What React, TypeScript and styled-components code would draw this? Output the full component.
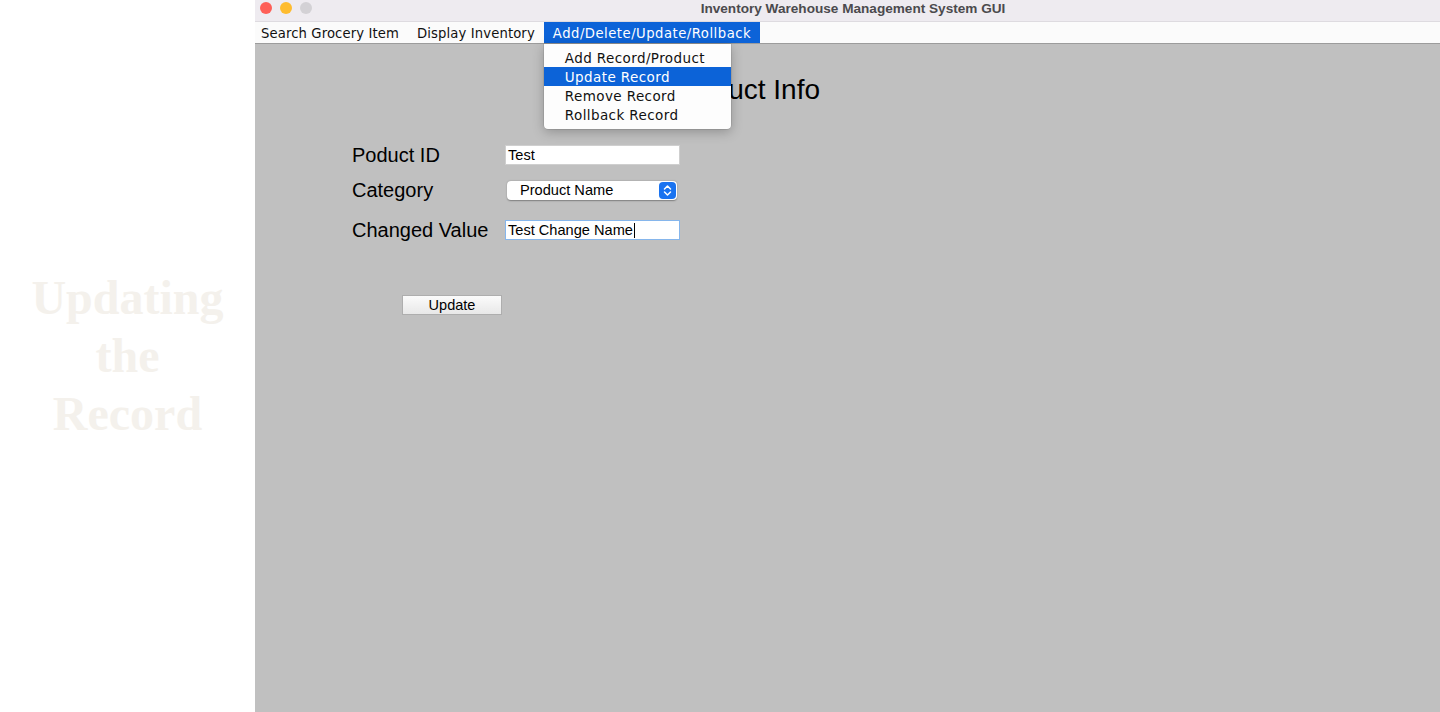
import styled, { createGlobalStyle } from "styled-components";

const GlobalStyle = createGlobalStyle`
  html, body {
    margin: 0;
    padding: 0;
    background: #ffffff;
  }
  * {
    box-sizing: border-box;
  }
`;

const Page = styled.div`
  display: flex;
  height: 100vh;
  min-height: 712px;
`;

const SidePanel = styled.aside`
  width: 255px;
  flex-shrink: 0;
  display: flex;
  align-items: center;
  justify-content: center;
  background: #ffffff;
`;

const SideHeading = styled.h1`
  margin: 0;
  font-family: "Liberation Serif", "DejaVu Serif", serif;
  font-weight: 700;
  font-size: 48px;
  line-height: 58px;
  color: #f4f1ec;
  text-align: center;
`;

const Window = styled.div`
  flex: 1;
  display: flex;
  flex-direction: column;
`;

const TitleBar = styled.div`
  height: 22px;
  display: grid;
  grid-template-columns: 1fr auto 1fr;
  align-items: start;
  padding-top: 2px;
  background: #eeebf0;
  border-bottom: 1px solid #dedbe0;
`;

const Lights = styled.div`
  display: flex;
  gap: 8px;
  padding-left: 5px;
`;

const Light = styled.span<{ $color: string }>`
  width: 12px;
  height: 12px;
  border-radius: 50%;
  background: ${(p) => p.$color};
`;

const WindowTitle = styled.div`
  margin-left: 11px;
  font-family: "Liberation Sans", Arial, sans-serif;
  font-weight: 700;
  font-size: 13.6px;
  line-height: 13px;
  color: #4b4a4d;
`;

const MenuBar = styled.nav`
  height: 22px;
  display: flex;
  align-items: stretch;
  background: #fbfbfb;
  border-bottom: 1px solid #9c9c9c;
`;

const MenuItem = styled.div<{ $active?: boolean }>`
  position: relative;
  display: flex;
  align-items: center;
  padding: 2px 9px 0;
  font-family: "DejaVu Sans", "Liberation Sans", sans-serif;
  font-size: 13.2px;
  letter-spacing: ${(p) => (p.$active ? "0.5px" : "0.12px")};
  color: ${(p) => (p.$active ? "#ffffff" : "#111111")};
  background: ${(p) => (p.$active ? "#0c63d8" : "transparent")};
  white-space: nowrap;

  &:first-child {
    padding-left: 6px;
  }
`;

const Dropdown = styled.ul`
  position: absolute;
  top: calc(100% + 1px);
  left: 0;
  width: 187px;
  margin: 0;
  padding: 4px 0 5px;
  list-style: none;
  background: #fdfdfd;
  border-radius: 0 0 4px 4px;
  box-shadow: 0 3px 12px rgba(0, 0, 0, 0.25), 0 0 0 0.5px rgba(0, 0, 0, 0.15);
  z-index: 10;
`;

const DropdownItem = styled.li<{ $active?: boolean }>`
  height: 19px;
  display: flex;
  align-items: center;
  padding-left: 21px;
  font-family: "DejaVu Sans", "Liberation Sans", sans-serif;
  font-size: 13.5px;
  letter-spacing: 0.4px;
  color: ${(p) => (p.$active ? "#ffffff" : "#111111")};
  background: ${(p) => (p.$active ? "#0c63d8" : "transparent")};
`;

const Content = styled.main`
  flex: 1;
  background: #c0c0c0;
  padding-top: 29px;
  font-family: "Liberation Sans", Arial, sans-serif;
`;

const FormTitle = styled.h2`
  margin: 0 0 0 316px;
  font-weight: 400;
  font-size: 28px;
  line-height: 34px;
  color: #000000;
`;

const Form = styled.div`
  display: flex;
  flex-direction: column;
  margin-top: 38px;
  padding-left: 97px;
`;

const Row = styled.div<{ $gap: number }>`
  display: flex;
  align-items: center;
  height: 20px;
  margin-top: ${(p) => p.$gap}px;
`;

const Label = styled.label`
  width: 153px;
  font-size: 20px;
  line-height: 20px;
  color: #000000;
`;

const Field = styled.div<{ $focused?: boolean }>`
  width: 175px;
  height: 20px;
  display: flex;
  align-items: center;
  padding: 0 2px;
  background: #ffffff;
  border: 1px solid ${(p) => (p.$focused ? "#86b6ec" : "#cfcfcf")};
  font-size: 14.6px;
  color: #000000;
  white-space: nowrap;
`;

const Caret = styled.span`
  display: inline-block;
  width: 1px;
  height: 15px;
  margin-left: 1px;
  background: #000000;
`;

const Select = styled.div`
  width: 170px;
  height: 19px;
  margin-left: 2px;
  display: flex;
  align-items: center;
  justify-content: space-between;
  padding: 0 1px 0 13px;
  background: #ffffff;
  border-radius: 4px;
  box-shadow: 0 0.5px 1.5px rgba(0, 0, 0, 0.35);
  font-size: 14.6px;
  color: #000000;
`;

const Stepper = styled.span`
  width: 17px;
  height: 17px;
  display: flex;
  align-items: center;
  justify-content: center;
  border-radius: 4px;
  background: #1a73f0;
`;

const UpdateButton = styled.button`
  width: 100px;
  height: 20px;
  margin: 55px 0 0 50px;
  padding: 0;
  background: linear-gradient(#fbfbfb, #e8e8e8);
  border: 1px solid #aeaeae;
  border-radius: 0;
  font-family: "Liberation Sans", Arial, sans-serif;
  font-size: 14.5px;
  color: #000000;
`;

export default function App() {
  return (
    <>
      <GlobalStyle />
      <Page>
        <SidePanel>
          <SideHeading>
            Updating
            <br />
            the
            <br />
            Record
          </SideHeading>
        </SidePanel>
        <Window>
          <TitleBar>
            <Lights>
              <Light $color="#fe5f57" />
              <Light $color="#febc2e" />
              <Light $color="#d3d1d5" />
            </Lights>
            <WindowTitle>Inventory Warehouse Management System GUI</WindowTitle>
            <div />
          </TitleBar>
          <MenuBar>
            <MenuItem>Search Grocery Item</MenuItem>
            <MenuItem>Display Inventory</MenuItem>
            <MenuItem $active>
              Add/Delete/Update/Rollback
              <Dropdown>
                <DropdownItem>Add Record/Product</DropdownItem>
                <DropdownItem $active>Update Record</DropdownItem>
                <DropdownItem>Remove Record</DropdownItem>
                <DropdownItem>Rollback Record</DropdownItem>
              </Dropdown>
            </MenuItem>
          </MenuBar>
          <Content>
            <FormTitle>Update Product Info</FormTitle>
            <Form>
              <Row $gap={0}>
                <Label>Poduct ID</Label>
                <Field>Test</Field>
              </Row>
              <Row $gap={15}>
                <Label>Category</Label>
                <Select>
                  Product Name
                  <Stepper>
                    <svg width="9" height="13" viewBox="0 0 9 13" fill="none">
                      <path
                        d="M1.5 5 L4.5 2 L7.5 5 M1.5 8 L4.5 11 L7.5 8"
                        stroke="#ffffff"
                        strokeWidth="1.5"
                        strokeLinecap="round"
                        strokeLinejoin="round"
                      />
                    </svg>
                  </Stepper>
                </Select>
              </Row>
              <Row $gap={20}>
                <Label>Changed Value</Label>
                <Field $focused>
                  Test Change Name
                  <Caret />
                </Field>
              </Row>
              <div>
                <UpdateButton>Update</UpdateButton>
              </div>
            </Form>
          </Content>
        </Window>
      </Page>
    </>
  );
}
